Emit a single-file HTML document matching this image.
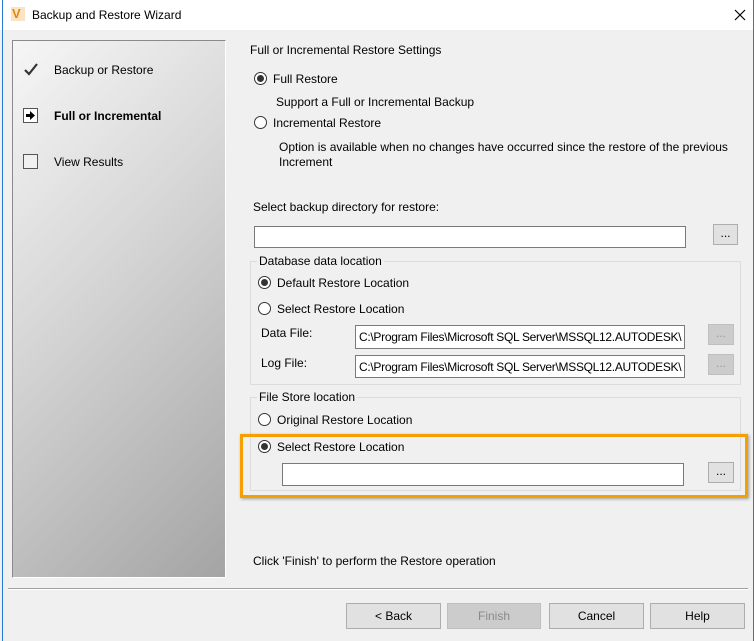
<!DOCTYPE html>
<html><head><style>
*{margin:0;padding:0;box-sizing:border-box}
body{width:756px;height:641px;background:#f0f0f0;font-family:"Liberation Sans",sans-serif;font-size:12px;color:#000;position:relative;overflow:hidden}
.a{position:absolute;white-space:nowrap;line-height:14px}
.t{transform:translateY(-7px)}
.rad{position:absolute;width:13px;height:13px;border:1px solid #333;border-radius:50%;background:#fff}
.rad.on::after{content:"";position:absolute;left:2px;top:2px;width:7px;height:7px;border-radius:50%;background:#333}
.inp{position:absolute;background:#fff;border:1px solid #7a7a7a;white-space:nowrap}
.btn{position:absolute;background:#e1e1e1;border:1px solid #adadad;text-align:center;font-size:12px}
.dis{background:#ccc;border-color:#bfbfbf;color:#999}
.grp{position:absolute;border:1px solid #dcdcdc}
.gl{position:absolute;background:#f0f0f0;padding:0 2px;line-height:14px}
</style></head><body>
<div style="position:absolute;left:0;top:0;width:756px;height:30px;background:#fff"></div>
<div style="position:absolute;left:2px;top:0;width:1px;height:641px;background:#2b79d6"></div>
<div style="position:absolute;left:753px;top:0;width:1px;height:641px;background:#2b79d6"></div>
<div style="position:absolute;left:754px;top:0;width:2px;height:641px;background:#fff"></div>
<div style="position:absolute;left:11px;top:7px;width:14px;height:14px;background:#fbe3c4"></div>
<div class="a" style="left:12px;top:7px;color:#e08a10;font-weight:bold;font-size:13px">V</div>
<div class="a t" style="left:32px;top:15px">Backup and Restore Wizard</div>
<svg style="position:absolute;left:734px;top:9px" width="12" height="12"><path d="M1 1L11 11M11 1L1 11" stroke="#000" stroke-width="1.2"/></svg>

<div style="position:absolute;left:12px;top:40px;width:214px;height:538px;border:1px solid #8a8a8a;border-right-color:#fff;border-bottom-color:#fff;background:linear-gradient(135deg,#f6f6f6 0%,#d8d8d8 40%,#a4a4a4 100%)"></div>
<svg style="position:absolute;left:24px;top:63px" width="14" height="13"><path d="M1 7L5 11L13 1" stroke="#333" stroke-width="2.2" fill="none"/></svg>
<div class="a t" style="left:54px;top:70px">Backup or Restore</div>
<div style="position:absolute;left:23px;top:108px;width:15px;height:15px;border:1px solid #555;background:#fff"></div>
<svg style="position:absolute;left:25px;top:110px" width="11" height="11"><path d="M1 4H5V1L10 5.5L5 10V7H1Z" fill="#000"/></svg>
<div class="a t" style="left:54px;top:116px;font-weight:bold">Full or Incremental</div>
<div style="position:absolute;left:23px;top:154px;width:15px;height:15px;border:1px solid #555;background:#f0f0f0"></div>
<div class="a t" style="left:54px;top:162px">View Results</div>

<div class="a t" style="left:250px;top:50px">Full or Incremental Restore Settings</div>
<div class="rad on" style="left:254px;top:72px"></div>
<div class="a t" style="left:273px;top:79px">Full Restore</div>
<div class="a t" style="left:276px;top:102px">Support a Full or Incremental Backup</div>
<div class="rad" style="left:254px;top:116px"></div>
<div class="a t" style="left:273px;top:123px">Incremental Restore</div>
<div class="a t" style="left:279px;top:147px">Option is available when no changes have occurred since the restore of the previous</div>
<div class="a t" style="left:279px;top:162px">Increment</div>
<div class="a t" style="left:253px;top:207px">Select backup directory for restore:</div>
<div class="inp" style="left:254px;top:226px;width:432px;height:22px"></div>
<div class="btn" style="left:713px;top:224px;width:25px;height:21px;line-height:17px">...</div>

<div class="grp" style="left:250px;top:261px;width:491px;height:124px"></div>
<div class="gl t" style="left:257px;top:261px">Database data location</div>
<div class="rad on" style="left:258px;top:276px"></div>
<div class="a t" style="left:277px;top:283px">Default Restore Location</div>
<div class="rad" style="left:258px;top:302px"></div>
<div class="a t" style="left:277px;top:309px">Select Restore Location</div>
<div class="a t" style="left:261px;top:333px">Data File:</div>
<div class="inp" style="left:355px;top:325px;width:330px;height:24px;padding:3px 3px;overflow:hidden;line-height:16px;letter-spacing:-0.3px">C:\Program Files\Microsoft SQL Server\MSSQL12.AUTODESK\</div>
<div class="btn dis" style="left:708px;top:324px;width:26px;height:21px;line-height:17px">...</div>
<div class="a t" style="left:261px;top:363px">Log File:</div>
<div class="inp" style="left:355px;top:355px;width:330px;height:23px;padding:3px 3px;overflow:hidden;line-height:16px;letter-spacing:-0.3px">C:\Program Files\Microsoft SQL Server\MSSQL12.AUTODESK\</div>
<div class="btn dis" style="left:708px;top:354px;width:26px;height:21px;line-height:17px">...</div>

<div class="grp" style="left:250px;top:397px;width:491px;height:94px"></div>
<div class="gl t" style="left:257px;top:397px">File Store location</div>
<div class="rad" style="left:258px;top:413px"></div>
<div class="a t" style="left:277px;top:420px">Original Restore Location</div>
<div style="position:absolute;left:240px;top:434px;width:508px;height:64px;border:3px solid #f5a000;box-shadow:1px 1px 3px rgba(0,0,0,.35)"></div>
<div class="rad on" style="left:258px;top:440px"></div>
<div class="a t" style="left:277px;top:447px">Select Restore Location</div>
<div class="inp" style="left:282px;top:463px;width:402px;height:23px"></div>
<div class="btn" style="left:708px;top:462px;width:26px;height:21px;line-height:17px">...</div>

<div class="a t" style="left:253px;top:561px">Click 'Finish' to perform the Restore operation</div>
<div style="position:absolute;left:8px;top:588px;width:740px;height:2px;background:#a0a0a0;border-bottom:1px solid #fff"></div>
<div class="btn" style="left:346px;top:603px;width:95px;height:26px;line-height:24px">&lt; Back</div>
<div class="btn dis" style="left:447px;top:603px;width:94px;height:26px;line-height:24px;color:#8a8a8a">Finish</div>
<div class="btn" style="left:549px;top:603px;width:95px;height:26px;line-height:24px">Cancel</div>
<div class="btn" style="left:650px;top:603px;width:95px;height:26px;line-height:24px">Help</div>
</body></html>
